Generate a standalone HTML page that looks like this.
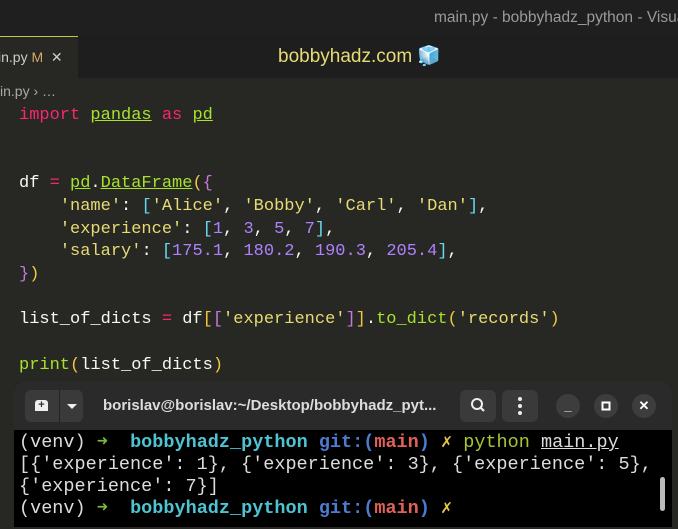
<!DOCTYPE html>
<html><head><style>
*{margin:0;padding:0;box-sizing:border-box}
body{width:678px;height:529px;background:#272723;overflow:hidden;position:relative;font-family:"Liberation Sans",sans-serif}
.title{position:absolute;left:0;top:0;width:678px;height:36px;background:#1f1f1f;color:#9a9a9a;font-size:15.5px;overflow:hidden}
.title span{position:absolute;left:434px;top:9px;white-space:nowrap}
.tabs{position:absolute;left:0;top:36px;width:678px;height:42px;background:#1e1e1e}
.tab{position:absolute;left:0;top:0;width:78px;height:42px;background:#272723;border-top:1px solid #c5c54a;color:#ccc;font-size:14px;overflow:hidden}
.tab span{position:absolute;left:-2px;top:12px;white-space:nowrap}
.brand{position:absolute;left:278px;top:8px;color:#e6db74;font-size:19px;white-space:nowrap}
.bc{position:absolute;left:0;top:83px;color:#aaa;font-size:14px}
.code{position:absolute;left:19px;top:105px;font-family:"Liberation Mono",monospace;font-size:17px;line-height:22.7px;color:#f8f8f2;white-space:pre}
.k{color:#f92672}.g{color:#a6e22e}.s{color:#e6db74}.n{color:#ae81ff}.b{color:#66d9ef}.y{color:#f5c542}.u{text-decoration:underline;text-decoration-color:#a6e22e}.p{color:#c678dd}
.term{position:absolute;left:14px;top:381px;width:658px;height:146px;background:#000;border-radius:10px 10px 0 0;overflow:hidden}
.th{position:absolute;left:0;top:0;width:658px;height:49px;background:#2a2a2a}
.btn{position:absolute;background:#3a3a3a;border-radius:6px}
.circ{position:absolute;width:24px;height:24px;border-radius:12px;background:#3d3d3d;color:#fff;font-size:13px;text-align:center;line-height:24px;font-weight:bold}
.tt{position:absolute;left:89px;top:16px;color:#ddd;font-size:15px;font-weight:bold;white-space:nowrap}
.tb{position:absolute;left:5px;top:51px;font-family:"Liberation Mono",monospace;font-size:18.5px;line-height:22px;color:#ddd;white-space:pre}
.c{color:#4ec3d2;font-weight:bold}.gi{color:#4c7bd0;font-weight:bold}.r{color:#e0605a;font-weight:bold}.x{color:#e8c84a;font-weight:bold}.gr{color:#7ab83d;font-weight:bold}.py{color:#a6c63a}
</style></head><body>
<div class="title"><span>main.py - bobbyhadz_python - Visual Studio Code</span></div>
<div class="tabs"><div class="tab"><span>in.py <b style="color:#d7a868;font-weight:normal">M</b> &nbsp;✕</span></div>
<div class="brand">bobbyhadz.com 🧊</div></div>
<div class="bc">in.py › …</div>
<div class="code"><span class="k">import</span> <span class="g u">pandas</span> <span class="k">as</span> <span class="g u">pd</span>


df <span class="k">=</span> <span class="g u">pd</span>.<span class="g u">DataFrame</span><span class="y">(</span><span class="p">{</span>
    <span class="s">'name'</span>: <span class="b">[</span><span class="s">'Alice'</span>, <span class="s">'Bobby'</span>, <span class="s">'Carl'</span>, <span class="s">'Dan'</span><span class="b">]</span>,
    <span class="s">'experience'</span>: <span class="b">[</span><span class="n">1</span>, <span class="n">3</span>, <span class="n">5</span>, <span class="n">7</span><span class="b">]</span>,
    <span class="s">'salary'</span>: <span class="b">[</span><span class="n">175.1</span>, <span class="n">180.2</span>, <span class="n">190.3</span>, <span class="n">205.4</span><span class="b">]</span>,
<span class="p">}</span><span class="y">)</span>

list_of_dicts <span class="k">=</span> df<span class="y">[</span><span class="p">[</span><span class="s">'experience'</span><span class="p">]</span><span class="y">]</span>.<span class="g">to_dict</span><span class="y">(</span><span class="s">'records'</span><span class="y">)</span>

<span class="g">print</span><span class="y">(</span>list_of_dicts<span class="y">)</span></div>
<div class="term">
<div class="th">
<div class="btn" style="left:11px;top:9px;width:58px;height:32px"></div>
<div style="position:absolute;left:45px;top:9px;width:1px;height:32px;background:#222"></div>
<div style="position:absolute;left:21px;top:19px;width:13px;height:11px;background:#eee;border-radius:3px 3px 0 0;color:#333;font-size:11px;line-height:10px;text-align:center;font-weight:bold">+</div>
<div style="position:absolute;left:53px;top:23px;border-left:5px solid transparent;border-right:5px solid transparent;border-top:5px solid #eee"></div>
<div class="tt">borislav@borislav:~/Desktop/bobbyhadz_pyt...</div>
<div class="btn" style="left:446px;top:9px;width:36px;height:32px"><svg width="36" height="32"><circle cx="17" cy="14" r="5" fill="none" stroke="#eee" stroke-width="2"/><line x1="20.5" y1="17.5" x2="24" y2="21" stroke="#eee" stroke-width="2.2"/></svg></div>
<div class="btn" style="left:488px;top:9px;width:36px;height:32px"><svg width="36" height="32"><circle cx="18" cy="9" r="2" fill="#eee"/><circle cx="18" cy="16" r="2" fill="#eee"/><circle cx="18" cy="23" r="2" fill="#eee"/></svg></div>
<div class="circ" style="left:542px;top:13px">_</div>
<div class="circ" style="left:580px;top:13px"><svg width="24" height="24"><rect x="8.5" y="8.5" width="7" height="7" fill="none" stroke="#fff" stroke-width="2"/></svg></div>
<div class="circ" style="left:618px;top:13px">✕</div>
</div>
<div class="tb">(venv) <span class="gr">➜</span>  <span class="c">bobbyhadz_python</span> <span class="gi">git:(</span><span class="r">main</span><span class="gi">)</span> <span class="x">✗</span> <span class="py">python</span> <span style="text-decoration:underline">main.py</span>
[{'experience': 1}, {'experience': 3}, {'experience': 5},
{'experience': 7}]
(venv) <span class="gr">➜</span>  <span class="c">bobbyhadz_python</span> <span class="gi">git:(</span><span class="r">main</span><span class="gi">)</span> <span class="x">✗</span></div>
<div style="position:absolute;left:646px;top:96px;width:5px;height:34px;background:#bbb;border-radius:3px"></div>
</div>
</body></html>
